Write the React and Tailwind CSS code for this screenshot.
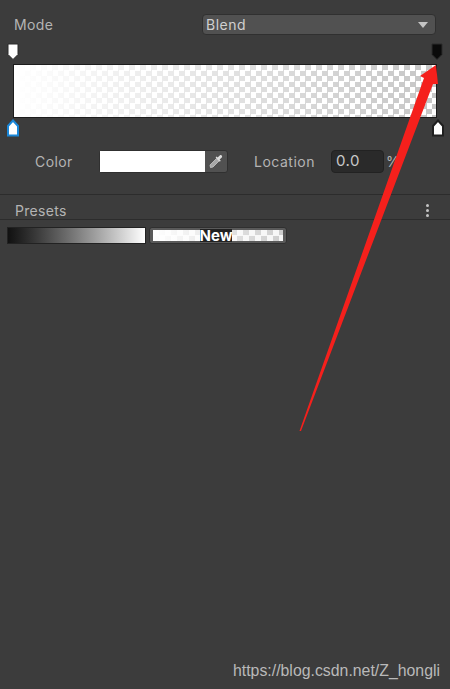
import React from "react";

// little handle shape above / below the gradient bar
const TopMarker = ({ fill, className }) => (
  <svg width="12" height="18" viewBox="0 0 12 18" className={className}>
    <path d="M1 1H11V11.5L6 16.5L1 11.5Z" fill={fill} stroke="#2a2a2a" strokeWidth="1" />
  </svg>
);

const BottomMarker = ({ fill, stroke, className }) => (
  <svg width="14" height="18" viewBox="0 0 14 18" className={className}>
    <path d="M2 16.5V7L7 1.5L12 7V16.5Z" fill={fill} stroke={stroke} strokeWidth="2" />
  </svg>
);

const Eyedropper = () => (
  <svg width="14" height="15" viewBox="0 0 14 15" fill="none">
    <path d="M7.5 4.5L10 7L4 13L1.5 13.6L1 11Z" fill="#a8a8a8" stroke="#c8c8c8" strokeWidth="0.8" />
    <path d="M6.6 3.6L10.8 7.8L11.8 6.8L10.6 5.6L13 3.2C13.6 2 12.4 0.6 11 1.2L8.6 3.6L7.6 2.6Z" fill="#dcdcdc" />
  </svg>
);

export default function App() {
  return (
    <div className="relative w-[450px] h-[689px] overflow-hidden bg-[#3c3c3c] font-['Inter','Liberation_Sans',sans-serif] text-[14px] text-[#b4b4b4]">
      {/* Mode row */}
      <div className="flex items-center justify-between pl-[14px] pr-[14px] pt-[13px] h-[36px]">
        <span className="tracking-[0.4px]">Mode</span>
        <div className="flex items-center justify-between w-[234px] h-[21px] pl-[3px] pr-[7px] rounded-[4px] bg-[#515151] border border-[#303030] text-[#d0d0d0] tracking-[0.5px]">
          <span>Blend</span>
          <div className="w-0 h-0 border-l-[5px] border-r-[5px] border-t-[6px] border-l-transparent border-r-transparent border-t-[#c4c4c4]" />
        </div>
      </div>

      {/* Top markers */}
      <div className="flex justify-between pl-[7px] pr-[7px] mt-[7px] h-[18px]">
        <TopMarker fill="#ffffff" />
        <TopMarker fill="#0a0a0a" />
      </div>

      {/* Gradient bar */}
      <div className="mx-[13px] mt-[3px] h-[54px] border border-[#1c1c1c] [background:linear-gradient(to_right,#ffffff,#ffffff00),repeating-conic-gradient(#c6c6c6_0_25%,#ffffff_0_50%)_0_0/11px_11px]" />

      {/* Bottom markers */}
      <div className="flex justify-between pl-[6px] pr-[5px] mt-[1px] h-[18px]">
        <BottomMarker fill="#ffffff" stroke="#1b87d8" />
        <BottomMarker fill="#ffffff" stroke="#202020" />
      </div>

      {/* Color and location */}
      <div className="flex items-center mt-[13px] h-[23px] pl-[35px]">
        <span className="w-[64px] tracking-[0.4px]">Color</span>
        <div className="flex items-center h-[23px] w-[129px] rounded-[3px] bg-[#515151] border border-[#303030]">
          <div className="w-[105px] h-[21px] bg-white" />
          <div className="flex-1 flex items-center justify-center"><Eyedropper /></div>
        </div>
        <span className="ml-[26px] w-[77px] tracking-[0.5px]">Location</span>
        <div className="flex items-center w-[53px] h-[23px] pl-[4px] rounded-[4px] bg-[#2a2a2a] border border-[#222222] text-[15px] text-[#c8c8c8] tracking-[0.5px]">0.0</div>
        <span className="ml-[2px]">%</span>
      </div>

      {/* Presets header */}
      <div className="mt-[21px] h-[26px] flex items-center justify-between pl-[15px] pr-[21px] border-t border-b border-[#2c2c2c]">
        <span className="tracking-[0.3px] mt-[6px]">Presets</span>
        <div className="flex flex-col gap-[2px] mt-[6px]">
          <div className="w-[3px] h-[3px] rounded-full bg-[#c4c4c4]" />
          <div className="w-[3px] h-[3px] rounded-full bg-[#c4c4c4]" />
          <div className="w-[3px] h-[3px] rounded-full bg-[#c4c4c4]" />
        </div>
      </div>

      {/* Preset swatches */}
      <div className="flex gap-[3px] pl-[7px] mt-[7px]">
        <div className="w-[139px] h-[17px] border border-[#222222] bg-gradient-to-r from-[#111111] to-white" />
        <div className="relative w-[138px] h-[17px] px-[3px] py-[2px] rounded-[3px] bg-[#5a5a5a] border border-[#303030]">
          <div className="h-full [background:linear-gradient(to_right,#ffffff,#ffffff00),repeating-conic-gradient(#cdcdcd_0_25%,#f6f6f6_0_50%)_0_0/12px_11px]" />
          <span className="absolute inset-0 flex items-center justify-center pr-[4px]">
            <span className="bg-[#222222] leading-[13px] text-[15px] font-bold text-white">New</span>
          </span>
        </div>
      </div>

      {/* Red arrow annotation */}
      <svg width="450" height="689" className="absolute left-0 top-0 pointer-events-none">
        <path d="M299.5 431L424 78L420 76L436 65L438 84L433 84L301 431Z" fill="#f5201c" />
      </svg>

      {/* Watermark */}
      <span className="absolute left-[233px] top-[659px] font-['Liberation_Sans',sans-serif] text-[15.85px] text-[#b9b9b9]">https://blog.csdn.net/Z_hongli</span>
    </div>
  );
}
